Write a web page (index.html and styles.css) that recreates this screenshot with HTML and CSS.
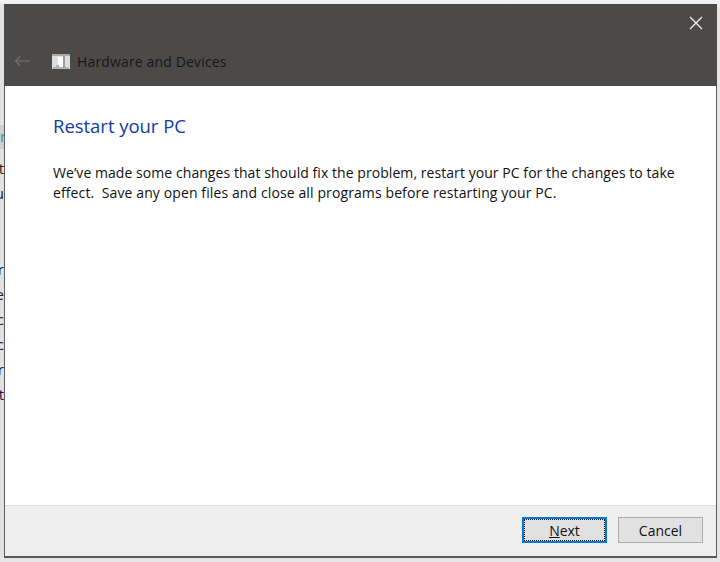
FILE: index.html
```html
<!DOCTYPE html>
<html lang="en">
<head>
<meta charset="utf-8">
<title>Hardware and Devices</title>
<link rel="stylesheet" href="styles.css">
</head>
<body>
<div class="desktop">
  <div class="behind">
    <div class="behind-bar">r</div>
    <div class="behind-group first">
      <div class="behind-line amber">t</div>
      <div class="behind-line navy">u</div>
    </div>
    <div class="behind-group second">
      <div class="behind-line navy">r</div>
      <div class="behind-line amber">e</div>
      <div class="behind-line amber">c</div>
      <div class="behind-line navy">c</div>
      <div class="behind-line navy">r</div>
      <div class="behind-line navy">t</div>
    </div>
  </div>
  <main class="dialog">
    <header class="titlebar">
      <div class="close-row">
        <svg class="close" width="14" height="14" viewBox="0 0 14 14" aria-label="Close"><path d="M1 1 13 13M13 1 1 13" stroke="#f2f2f2" stroke-width="1.3" fill="none"/></svg>
      </div>
      <div class="nav-row">
        <svg class="back" width="16" height="12" viewBox="0 0 16 12" aria-label="Back"><path d="M16 6H1.5M6.5 1 1.5 6l5 5" stroke="#6a6a68" stroke-width="1.4" fill="none"/></svg>
        <svg class="app-icon" width="18" height="15" viewBox="0 0 18 15"><rect width="18" height="15" fill="#dedede"/><rect width="18" height="2" fill="#a9a9a9"/><rect x="1" y="13" width="16" height="2" fill="#b5b5b5"/><rect x="6" y="3" width="5" height="10" fill="#fbfbfb"/><rect x="11" y="2" width="2" height="12" fill="#9a9a9a"/><rect x="4" y="11" width="3" height="3" fill="#b0b0b0"/></svg>
        <span class="title">Hardware and Devices</span>
      </div>
    </header>
    <section class="content">
      <h1 class="heading">Restart your PC</h1>
      <p class="message">We’ve made some changes that should fix the problem, restart your PC for the changes to take<br><span class="message-second">effect.&nbsp; Save any open files and close all programs before restarting your PC.</span></p>
    </section>
    <footer class="footer">
      <button class="btn btn-default" type="button"><span class="btn-focus"><u>N</u>ext</span></button>
      <button class="btn" type="button">Cancel</button>
    </footer>
  </main>
</div>
</body>
</html>
```

FILE: styles.css
```css
* { box-sizing: border-box; }
html, body { margin: 0; height: 100%; }
body { background: #e6e6e6; overflow: hidden; font-family: "Open Sans", "Noto Sans", "Liberation Sans", sans-serif; }
.desktop { display: flex; width: 720px; height: 562px; padding-top: 4px; padding-bottom: 4px; background: linear-gradient(#f4f4f4, #e6e6e6 8px); }
.behind { width: 4px; flex: none; overflow: hidden; background: #e2e2e2; font-size: 15px; }
.behind-bar { height: 24px; margin-top: 121px; background: #cfcfcf; color: #4a8aa8; text-align: right; line-height: 22px; }
.behind-group { display: flex; flex-direction: column; }
.behind-group.first { margin-top: 7px; }
.behind-group.second { margin-top: 51px; }
.behind-line { height: 25px; line-height: 25px; text-align: right; display: flex; justify-content: flex-end; }
.amber { color: #2a2418; }
.navy { color: #15124c; }
.dialog { width: 713px; flex: none; display: flex; flex-direction: column; background: #fff; border-left: 1px solid #5c5c5c; border-right: 1px solid #5c5c5c; border-bottom: 2px solid #55595c; }
.titlebar { height: 82px; margin-left: -1px; margin-right: -1px; flex: none; background: #4c4a48; display: flex; flex-direction: column; }
.close-row { display: flex; justify-content: flex-end; padding: 12px 14px 0 0; height: 40px; }
.nav-row { display: flex; align-items: center; height: 24px; margin-top: 5px; padding-left: 10px; }
.app-icon { margin-left: 22px; }
.title { margin-left: 7px; font-size: 14px; color: #161616; letter-spacing: 0.15px; }
.content { flex: 1; padding: 0 0 0 48px; }
.heading { margin: 27px 0 0; font-size: 18.5px; font-weight: 400; line-height: 26px; color: #0c3ea5; letter-spacing: -0.03px; }
.message { margin: 24px 0 0; font-size: 14px; line-height: 20px; color: #111; letter-spacing: 0.06px; white-space: nowrap; }
.message-second { letter-spacing: 0.11px; }
.footer { height: 51px; flex: none; background: #efefef; border-top: 1px solid #dfdfdf; display: flex; justify-content: flex-end; align-items: flex-start; gap: 11px; padding: 11px 13px 0 0; }
.btn { width: 85px; height: 26px; padding: 0; background: #e1e1e1; border: 1px solid #adadad; font: inherit; font-size: 14px; color: #111; display: flex; align-items: center; justify-content: center; }
.btn-default { border: 2px solid #0078d7; }
.btn-focus { width: 100%; height: 100%; border: 1px dotted #111; display: flex; align-items: center; justify-content: center; }
```
